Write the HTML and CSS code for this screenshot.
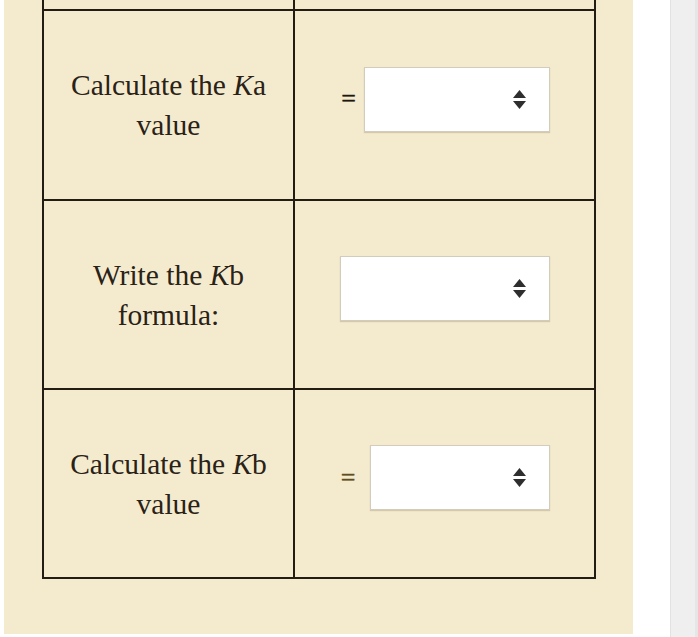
FILE: index.html
```html
<!DOCTYPE html>
<html lang="en">
<head>
<meta charset="utf-8">
<title>Ka / Kb</title>
<link rel="stylesheet" href="styles.css">
</head>
<body>
<div class="page">
  <main class="panel">
    <table class="grid">
      <tr class="stub">
        <td></td>
        <td></td>
      </tr>
      <tr class="first">
        <td class="label">Calculate the <i>K</i>a<br>value</td>
        <td class="answer">
          <div class="group">
            <span class="eq">=</span>
            <div class="select w186">
              <svg class="arrows" width="13" height="19" viewBox="0 0 13 19"><path d="M6.5 0 L13 8 L0 8 Z M0 11 L13 11 L6.5 19 Z" fill="#2e2e2e"/></svg>
            </div>
          </div>
        </td>
      </tr>
      <tr>
        <td class="label">Write the <i>K</i>b<br>formula:</td>
        <td class="answer">
          <div class="group">
            <div class="select w210">
              <svg class="arrows" width="13" height="19" viewBox="0 0 13 19"><path d="M6.5 0 L13 8 L0 8 Z M0 11 L13 11 L6.5 19 Z" fill="#2e2e2e"/></svg>
            </div>
          </div>
        </td>
      </tr>
      <tr>
        <td class="label">Calculate the <i>K</i>b<br>value</td>
        <td class="answer">
          <div class="group wide-gap">
            <span class="eq eq-olive">=</span>
            <div class="select w180">
              <svg class="arrows" width="13" height="19" viewBox="0 0 13 19"><path d="M6.5 0 L13 8 L0 8 Z M0 11 L13 11 L6.5 19 Z" fill="#2e2e2e"/></svg>
            </div>
          </div>
        </td>
      </tr>
    </table>
  </main>
  <div class="spacer"></div>
  <aside class="sidebar"></aside>
</div>
</body>
</html>
```

FILE: styles.css
```css
html, body {
  margin: 0;
  padding: 0;
  background: #ffffff;
  overflow: hidden;
}

.page {
  display: flex;
  width: 698px;
  height: 637px;
}

.panel {
  margin-left: 4px;
  width: 629px;
  height: 634px;
  background: #f4ebcf;
  padding-left: 38px;
  box-sizing: border-box;
}

.spacer {
  width: 37px;
  background: #ffffff;
}

.sidebar {
  width: 28px;
  height: 637px;
  background: #efefef;
  border-left: 1px solid #e2e2e2;
  box-shadow: inset -3px 0 0 #e6e6e6;
  box-sizing: border-box;
}

.grid {
  border-collapse: collapse;
  width: 554px;
  font-family: "Liberation Serif", "Times New Roman", serif;
  color: #2a2216;
}

.grid td {
  border: 2px solid #231c12;
  padding: 0;
  vertical-align: middle;
}

.grid td:first-child {
  width: 249px;
}

.grid tr.stub td {
  border-top: none;
  height: 9px;
}

.grid tr {
  height: 189px;
}

.grid tr.first {
  height: 190px;
}

.grid tr.stub {
  height: 9px;
}

.label {
  text-align: center;
  font-size: 29.5px;
  line-height: 40px;
}

.label i {
  font-style: italic;
}

.answer .group {
  display: flex;
  justify-content: center;
  align-items: center;
  gap: 8px;
  margin-bottom: 12px;
}

.answer .group.wide-gap {
  gap: 15px;
}

.eq {
  font-size: 26px;
  line-height: 30px;
  color: #1e1810;
  margin-left: 2px;
  -webkit-text-stroke: 0.4px #1e1810;
}

.eq-olive {
  color: #5e4f22;
  -webkit-text-stroke: 0.4px #5e4f22;
}

.select {
  height: 65px;
  background: #ffffff;
  border: 1px solid #d3ccbc;
  box-shadow: 0 1px 1px rgba(120, 100, 60, 0.25);
  box-sizing: border-box;
  display: flex;
  align-items: center;
  justify-content: flex-end;
  padding-right: 23px;
}

.w186 { width: 186px; }
.w210 { width: 210px; }
.w180 { width: 180px; }

.arrows {
  display: block;
}
```
